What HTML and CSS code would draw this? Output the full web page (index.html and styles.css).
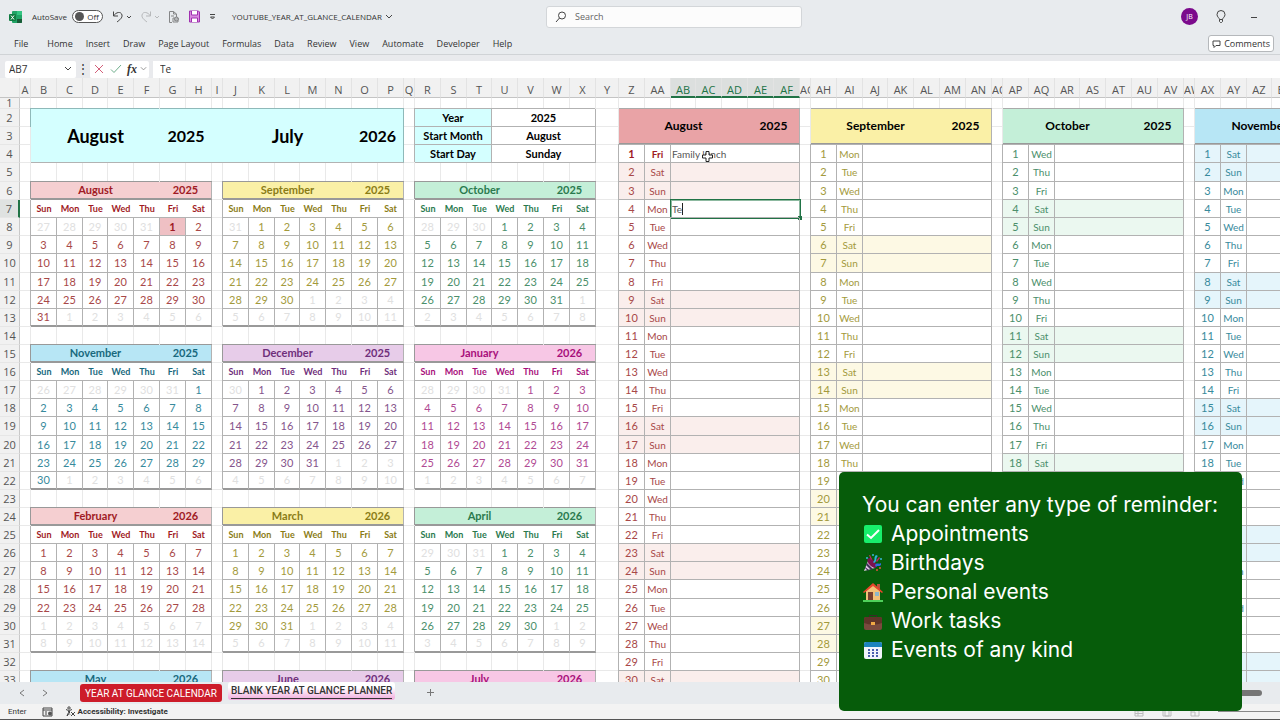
FILE: index.html
```html
<!DOCTYPE html>
<html lang="en">
<head>
    <meta charset="utf-8">
    <title>YOUTUBE_YEAR_AT_GLANCE_CALENDAR</title>
    <link rel="stylesheet" href="styles.css">
</head>
<body>
    <div class="app">
        <header class="title-bar">
            <div class="quick-access">
                <svg class="excel-logo" width="13" height="12" viewBox="0 0 13 12">
                    <rect x="3" y="0" width="10" height="12" rx="1" fill="#21a366"/>
                    <path d="M8 0h4a1 1 0 0 1 1 1v3H8z" fill="#33c481"/>
                    <path d="M8 8h5v3a1 1 0 0 1-1 1H8z" fill="#185c37"/>
                    <rect x="0" y="3" width="7" height="7" rx="1" fill="#107c41"/>
                    <path class="excel-x" d="M2 4.500l3 4M5 4.500l-3 4"/>
                </svg>
                <label for="autosave">AutoSave</label>
                <span class="switch"><input type="checkbox" id="autosave"><span>Off</span></span>
                <button class="icon-btn" aria-label="Undo">
                    <svg width="20" height="14" viewBox="0 0 20 14"><path d="M1.500 1.500v4.500h4.500M1.500 6C4 2 9 1 10 5c.5 3-2.500 5-5 7"/><path d="M15 6l2 2 2-2"/></svg>
                </button>
                <button class="icon-btn faded" aria-label="Redo">
                    <svg width="20" height="14" viewBox="0 0 20 14"><path d="M10.500 1.500v4.500H6M10.500 6C8 2 3 1 2 5c-.5 3 2.500 5 5 7"/><path d="M15 6l2 2 2-2"/></svg>
                </button>
                <button class="icon-btn dim" aria-label="Print preview">
                    <svg width="12" height="14" viewBox="0 0 12 14"><path d="M4 12.500H1.500v-11h4L8.500 4v3M5.500 1.500V4h3M5 8h5v4H5zM6 10h3M3 6h3"/><circle cx="8.500" cy="9" r="2"/></svg>
                </button>
                <button class="icon-btn save" aria-label="Save">
                    <svg width="13" height="13" viewBox="0 0 12 13"><path d="M1 1h9l1 1v10H1z" fill="#d98be0"/><path d="M3 1v4h6V1M3 12V8h6v4" fill="#fff"/></svg>
                </button>
                <button class="icon-btn" aria-label="Customize">
                    <svg width="7" height="8" viewBox="0 0 7 8"><path d="M1 1.500h5M1.500 4l2 2 2-2z"/></svg>
                </button>
                <button class="file-name">YOUTUBE_YEAR_AT_GLANCE_CALENDAR
                    <svg width="8" height="6" viewBox="0 0 8 6"><path d="M1 1l3 3 3-3"/></svg>
                </button>
            </div>
            <div class="search">
                <svg width="12" height="12" viewBox="0 0 12 12"><circle cx="7" cy="4.500" r="3.500"/><path d="M4.500 7L1 11"/></svg>
                <input type="text" placeholder="Search" aria-label="Search">
            </div>
            <div class="account">
                <button class="avatar">JB</button>
                <button class="icon-btn" aria-label="Tips">
                    <svg width="10" height="14" viewBox="0 0 10 14"><path d="M3.500 9.500C3.500 8 1 7 1 4.500a4 4 0 0 1 8 0C9 7 6.500 8 6.500 9.500v2l-1 1h-1l-1-1zM3.500 9.500h3"/></svg>
                </button>
                <button class="icon-btn" aria-label="Minimize">
                    <svg width="8" height="8" viewBox="0 0 8 8"><path d="M1 4.500h6"/></svg>
                </button>
            </div>
        </header>

        <nav class="ribbon">
            <a href="#">File</a>
            <a href="#">Home</a>
            <a href="#">Insert</a>
            <a href="#">Draw</a>
            <a href="#">Page Layout</a>
            <a href="#">Formulas</a>
            <a href="#">Data</a>
            <a href="#">Review</a>
            <a href="#">View</a>
            <a href="#">Automate</a>
            <a href="#">Developer</a>
            <a href="#">Help</a>
            <button class="comments">
                <svg width="9" height="8" viewBox="0 0 9 8"><path d="M1 1h7v4.500H4l-2 2v-2H1z"/></svg>
                Comments
            </button>
        </nav>

        <div class="formula-row">
            <div class="name-box">
                <input type="text" value="AB7" aria-label="Name box">
                <svg width="8" height="6" viewBox="0 0 8 6"><path d="M1 1l3 3 3-3"/></svg>
            </div>
            <span class="dots">&#8942;</span>
            <div class="fx-buttons">
                <button class="cancel" aria-label="Cancel"><svg width="10" height="10" viewBox="0 0 10 10"><path d="M1 1l8 8M9 1L1 9"/></svg></button>
                <button class="enter" aria-label="Enter"><svg width="12" height="10" viewBox="0 0 12 10"><path d="M1 5.500l3 3L11 1"/></svg></button>
                <button class="fx"><i>fx</i><svg width="7" height="6" viewBox="0 0 8 6"><path d="M1 1l3 3 3-3"/></svg></button>
            </div>
            <input type="text" class="formula-input" value="Te" aria-label="Formula bar">
        </div>

        <main class="sheet-wrap">
            <table class="sheet" id="sheet"></table>
        </main>

        <div class="tab-bar">
            <button class="nav-arrow" aria-label="Previous sheet"><svg width="6" height="8" viewBox="0 0 6 8"><path d="M5 1L1 4l4 3"/></svg></button>
            <button class="nav-arrow" aria-label="Next sheet"><svg width="6" height="8" viewBox="0 0 6 8"><path d="M1 1l4 3-4 3"/></svg></button>
            <button class="tab tab-red">YEAR AT GLANCE CALENDAR</button>
            <button class="tab tab-active"><span>BLANK YEAR AT GLANCE PLANNER</span></button>
            <button class="add-tab" aria-label="New sheet"><svg width="9" height="9" viewBox="0 0 9 9"><path d="M4.500 1v7M1 4.500h7"/></svg></button>
            <div class="scroll-thumb"></div>
        </div>

        <footer class="status-bar">
            <span class="mode">Enter</span>
            <svg width="11" height="10" viewBox="0 0 11 10"><path d="M1 1h9v8H1zM1 3h9M3 5h2M3 7h2"/><circle cx="8" cy="6.500" r="2" fill="#555"/></svg>
            <span class="access">
                <svg width="11" height="11" viewBox="0 0 11 11"><circle cx="4" cy="2" r="1.200"/><path d="M1 3.500l2.500 1v2L2 10l2-2.500 1 1M7 3.500l-2.500 1V7M6 6l4 4M10 6l-4 4"/></svg>
                Accessibility: Investigate
            </span>
            <span class="views">
                <svg width="10" height="10" viewBox="0 0 10 10"><path d="M1 1h8v8H1zM1 4h8M1 6.500h8M4 1v8"/></svg>
                <svg width="10" height="10" viewBox="0 0 10 10"><path d="M1 1h8v8H1zM3 3h4v6H3z"/></svg>
                <svg width="10" height="10" viewBox="0 0 10 10"><path d="M1 1h8v8H1zM1 5h4v4"/></svg>
                <span class="zoom-line"></span>
            </span>
        </footer>

        <aside class="callout">
            <p>You can enter any type of reminder:</p>
            <ul>
                <li>
                    <svg width="20" height="20" viewBox="0 0 20 20"><rect x="1" y="1" width="18" height="18" rx="2" fill="#18ee6c"/><path class="tick" d="M4 10.500l4 3.500 8-8"/></svg>
                    Appointments
                </li>
                <li>
                    <svg width="20" height="20" viewBox="0 0 20 20">
                        <path d="M1 18L5 8l7 7z" fill="#e3cbe6"/>
                        <path d="M3 12l5 5 2-1-6-6zM2 15l3 3 1-1-4-3z" fill="#3d3156"/>
                        <ellipse cx="9" cy="10" rx="3" ry="6" transform="rotate(-42 9 10)" fill="#7b1250"/>
                        <path d="M10 9c3-2 0-4 3-7l2 1c-3 2 0 5-4 7z" fill="#2fb0d8"/>
                        <path d="M12 12c2-3 4 0 6-2v2c-2 2-4 0-5 2z" fill="#2f6be0"/>
                        <path d="M6 2l1 0 2 4-1 1zM13 8l3-4 1 1-3 4z" fill="#c2255c"/>
                        <g fill="#39b8d8"><circle cx="4" cy="5" r="1"/><circle cx="18" cy="6" r="1"/><circle cx="10" cy="2" r="1"/></g>
                        <g fill="#e0533d"><circle cx="17" cy="15" r="1"/><circle cx="14" cy="17" r="1"/></g>
                    </svg>
                    Birthdays
                </li>
                <li>
                    <svg width="20" height="20" viewBox="0 0 20 20">
                        <path d="M14 2h3v6h-3z" fill="#b5533c"/>
                        <path d="M3 9l7-6 7 6v9H3z" fill="#f2c078"/>
                        <path d="M0 10l10-9 10 9-1 1-9-7-9 7z" fill="#e8452c"/>
                        <path d="M5 10h5v8H5z" fill="#7a4030"/>
                        <path d="M12 10h4v4h-4z" fill="#8fb7c9"/>
                        <path d="M0 18h20v2H0z" fill="#4fd05a"/>
                    </svg>
                    Personal events
                </li>
                <li>
                    <svg width="20" height="20" viewBox="0 0 20 20">
                        <path d="M6 6V4h8v2h-1V5H7v1z" fill="#3c2a26"/>
                        <rect x="1" y="6" width="18" height="13" rx="2" fill="#7a4a3e"/>
                        <path d="M1 8q0-2 2-2h14q2 0 2 2v4q-9 3-18 0z" fill="#5f3429"/>
                        <rect x="8" y="11" width="4" height="3" fill="#f0a845"/>
                    </svg>
                    Work tasks
                </li>
                <li>
                    <svg width="20" height="20" viewBox="0 0 20 20">
                        <rect x="1" y="2" width="18" height="17" rx="2" fill="#f1f4fb"/>
                        <path d="M1 7V4q0-2 2-2h14q2 0 2 2v3z" fill="#1c83bd"/>
                        <path d="M5 9h2v2H5zM9 9h2v2H9zM13 9h2v2h-2zM5 12h2v2H5zM9 12h2v2H9zM13 12h2v2h-2zM5 15h2v2H5zM9 15h2v2H9zM13 15h2v2h-2z" fill="#4a5fae"/>
                    </svg>
                    Events of any kind
                </li>
            </ul>
        </aside>
    </div>

    <script src="sheet.js"></script>
</body>
</html>
```
FILE: styles.css
```css
:root {
    --chrome: #e8ebee;
    --line: #b2b2b2;
    --grid: #e9e9e9;
    --green: #217346;
}

* { box-sizing: border-box; }

body {
    margin: 0;
    background: #fff;
    color: #333;
    font-family: "Open Sans", "Noto Sans", sans-serif;
    font-size: 9px;
}

button, input { font: inherit; color: inherit; border: 0; background: none; padding: 0; margin: 0; outline: 0; }
svg { fill: none; stroke: #444; flex: none; }
svg [fill] { stroke: none; }

.app { position: relative; display: flex; flex-direction: column; height: 100vh; overflow: hidden; }

/* title bar */
.title-bar { display: grid; grid-template-columns: minmax(0, 546px) 256px 1fr; align-items: center; height: 33px; background: var(--chrome); flex: none; }
.quick-access { display: flex; align-items: center; gap: 8px; padding-left: 9px; white-space: nowrap; font-size: 8px; }
.excel-logo { margin-right: 2px; }
.excel-logo .excel-x { stroke: #fff; }
.quick-access label { margin-right: -3px; }
.switch { position: relative; display: flex; align-items: center; margin-right: 1px; }
.switch input { appearance: none; width: 31px; height: 13px; border: 1px solid #555; border-radius: 7px; background: #fff; }
.switch input::before { content: ""; display: block; width: 9px; height: 9px; margin: 1px 2px; border-radius: 50%; background: #555; }
.switch span { position: absolute; right: 4px; }
.icon-btn { display: flex; align-items: center; }
.faded { opacity: .3; }
.dim { opacity: .6; }
.save [fill] { stroke: #a030b0; }
.file-name { display: flex; align-items: center; gap: 3px; margin-left: 8px; }
.search { display: flex; align-items: center; gap: 8px; height: 22px; padding: 0 8px; background: #fcfcfc; border: 1px solid #d3d6d9; border-radius: 3px; }
.search input { flex: 1; min-width: 0; }
.search input::placeholder { color: #666; opacity: 1; }
.account { display: flex; justify-content: flex-end; align-items: center; gap: 23px; padding-right: 21px; }
.account .icon-btn { width: 10px; justify-content: center; }
.avatar { width: 17px; height: 17px; margin-right: -5px; border-radius: 50%; background: #7b0a8c; color: #fff; font-size: 7px; }

/* ribbon tabs */
.ribbon { display: flex; align-items: center; gap: 13px; height: 22px; padding: 0 6px 0 14px; background: var(--chrome); border-bottom: 1px solid #d0d3d6; flex: none; }
.ribbon a { color: #333; text-decoration: none; white-space: nowrap; }
.ribbon a:first-child { margin-right: 6px; }
.comments { display: flex; align-items: center; gap: 3px; height: 17px; margin-left: auto; padding: 0 3px; background: #fff; border: 1px solid #b5b8bb; border-radius: 3px; }

/* formula bar */
.formula-row { display: flex; align-items: center; height: 23px; padding: 5px 0 0 5px; background: #e9eaed; flex: none; font-size: 10px; }
.name-box { display: flex; align-items: center; width: 71px; height: 17px; padding: 0 4px; background: #fff; border-radius: 2px; }
.name-box input { width: 55px; }
.dots { width: 14px; text-align: center; font-size: 12px; line-height: 16px; }
.fx-buttons { display: flex; align-items: center; justify-content: space-between; width: 59px; height: 17px; padding: 0 2px 0 4px; background: #fff; border-radius: 2px; }
.fx-buttons button { display: flex; align-items: center; }
.cancel svg { stroke: #d3607a; }
.enter svg { stroke: #6fae8c; }
.fx-buttons .fx { gap: 3px; font: bold 12px "Liberation Serif", serif; }
.fx svg { stroke: #888; }
.formula-input { flex: 1; min-width: 0; height: 17px; margin-left: 4px; padding-left: 7px; background: #fff; }

/* sheet grid */
.sheet-wrap { flex: 1; min-height: 0; overflow: hidden; background: #fff; }
.sheet { width: 100px; table-layout: fixed; border-collapse: separate; border-spacing: 0; }
.sheet tr { height: 18px; }
.sheet tr.tall { height: 19px; }
.sheet tr.short { height: 11px; }
.sheet tr.letters { height: 20px; }
.sheet th, .sheet td { padding: 0; overflow: hidden; white-space: nowrap; text-align: center; line-height: 10px; }
.sheet td { border-right: 1px solid var(--grid); border-bottom: 1px solid var(--grid); font-family: "Century Gothic", Lato, sans-serif; }
.sheet th { background: #f1f1f1; color: #555; font-weight: normal; font-size: 11px; }
.letters th { padding-top: 5px; border-bottom: 1px solid #c4c4c4; border-right: 1px solid #e3e3e3; }
.sheet .row-num { border-right: 1px solid #c9c9c9; border-bottom: 1px solid #e6e6e6; }
.short .row-num { line-height: 8px; }
.letters .active { background: #dcdfde; color: var(--green); border-bottom: 2px solid var(--green); }
.sheet .row-num.active { background: #dfe2e1; border-right: 2px solid var(--green); }

/* bordered ranges sit on the gridlines of their neighbours */
.sheet td.box { border-color: var(--line); box-shadow: -1px -1px 0 var(--line); }
.sheet td.banner { background: #d4ffff; border-right: 0; box-shadow: 0 -1px 0 #8fb9b9; color: #000; font-size: 18px; font-weight: bold; line-height: 22px; }
.sheet td.banner-year { font-size: 16px; }
.sheet td.banner.first { box-shadow: -1px -1px 0 #8fb9b9; }
.sheet td.banner.last { border-right: 1px solid #8fb9b9; }
.sheet td.setting { color: #000; font-size: 11px; font-weight: bold; }
.sheet td.setting-label { background: #d4ffff; }

.sheet td.month-title { background: var(--soft); color: var(--dark); font-size: 11px; font-weight: bold; border-right: 0; border-bottom: 2px solid #999; box-shadow: 0 -1px 0 #999; }
.sheet td.dow { color: var(--dark); font-size: 9px; font-weight: bold; border-right: 0; box-shadow: none; }
.sheet td.month-title.first { box-shadow: -1px -1px 0 #999; }
.sheet td.dow.first { box-shadow: -1px 0 0 var(--line); }
.sheet td.month-title.last, .sheet td.dow.last { border-right: 1px solid var(--line); }
.sheet td.day { color: var(--ink); font-size: 11px; }
.sheet td.other { color: #e0e0e0; }
.sheet td.today { background: #efc0c4; color: var(--dark); font-weight: bold; }
.sheet td.bottom { border-bottom: 2px solid #999; }

.sheet td.plan-title { background: var(--head); color: #000; font-size: 12px; font-weight: bold; border-right: 0; border-bottom: 2px solid #999; box-shadow: 0 -1px 0 #aaa; }
.sheet td.plan-title.last { border-right: 1px solid var(--line); }
.sheet td.plan-day { color: var(--ink); font-size: 11px; }
.sheet td.plan-name { font-size: 10px; }
.sheet td.marked { color: var(--dark); font-weight: bold; }
.sheet td.weekend { background: var(--weekend); }
.sheet td.event { position: relative; padding-left: 1px; text-align: left; color: #555; font-size: 10px; overflow: visible; }
.sheet td.editing { padding: 0; border: 0; box-shadow: 0 0 0 1px var(--green), inset 0 0 0 1px #8db9a0; }
.sheet td.editing::after { content: ""; position: absolute; right: -2px; bottom: -2px; width: 4px; height: 4px; background: var(--green); }
.editing input { width: 11px; height: 12px; margin-left: 1px; border-right: 1px solid #222; vertical-align: middle; }
.pointer { position: absolute; left: 30px; top: 5px; z-index: 2; fill: #fff; stroke: #222; }

.m-red { --soft: #f5cfd1; --head: #e9a3a6; --dark: #a01a24; --ink: #a84848; --weekend: #faeeec; }
.m-yellow { --soft: #faf0a6; --head: #faf0a6; --dark: #8a7c16; --ink: #a39a3c; --weekend: #fdf9e4; }
.m-green { --soft: #c4efd8; --head: #c4efd8; --dark: #2a7a4e; --ink: #4b8f6b; --weekend: #ebf8f0; }
.m-blue { --soft: #b7e6f5; --head: #b7e6f5; --dark: #18697d; --ink: #388a9c; --weekend: #e5f5fb; }
.m-purple { --soft: #e7cce9; --head: #e7cce9; --dark: #6f2f7b; --ink: #85558c; --weekend: #f6edf7; }
.m-pink { --soft: #f7c7e5; --head: #f7c7e5; --dark: #a80f7b; --ink: #b04a93; --weekend: #fcecf6; }

/* bottom bars */
.tab-bar { display: flex; align-items: center; height: 22px; padding: 0 18px; background: var(--chrome); flex: none; font-family: Roboto, sans-serif; font-size: 10px; }
.nav-arrow { width: 22px; margin-left: -7px; margin-right: 8px; }
.nav-arrow svg, .add-tab svg { stroke: #777; }
.tab { height: 18px; padding: 0 5px; border-radius: 3px; white-space: nowrap; }
.tab-red { margin-left: 16px; background: #cd1c2a; color: #fff; }
.tab-active { align-self: flex-start; margin-left: 6px; padding: 0 3px; background: linear-gradient(#fff 30%, #f0a8dc); font-weight: 500; }
.tab-active span { display: block; border-bottom: 1px solid #333; line-height: 15px; }
.add-tab { margin-left: 31px; }
.scroll-thumb { width: 180px; height: 6px; margin-left: auto; border-radius: 3px; background: #767676; }
.status-bar { display: flex; align-items: center; gap: 14px; height: 16px; padding: 0 0 0 8px; background: #f3f3f3; border-bottom: 1px solid #555; font-family: Roboto, sans-serif; font-size: 8px; flex: none; }
.status-bar .mode { margin-right: 1px; }
.access { display: flex; align-items: center; gap: 2px; margin-left: -2px; font-weight: bold; }
.views { display: flex; align-items: center; gap: 18px; margin-left: auto; }
.views svg { stroke: #bbb; }
.zoom-line { width: 62px; height: 1px; background: #888; }

/* reminder callout */
.callout { position: absolute; right: 38px; bottom: 9px; width: 403px; padding: 18px 20px 47px 23px; border-radius: 5px; background: #065c0a; color: #fff; font: 21px/29px Inter, sans-serif; white-space: nowrap; }
.callout p { margin: 0; }
.callout ul { margin: 0; padding: 0; list-style: none; }
.callout li { display: flex; align-items: center; gap: 8px; }
.callout svg { stroke: none; margin-left: 1px; }
.callout .tick { stroke: #fff; stroke-width: 2px; }
```
FILE: sheet.js
```js
const LAST_ROW = 40;
const LAST_COL = 56;
const MONTHS = ['January', 'February', 'March', 'April', 'May', 'June', 'July',
    'August', 'September', 'October', 'November', 'December'];
const DAYS = ['Sun', 'Mon', 'Tue', 'Wed', 'Thu', 'Fri', 'Sat'];
const THEMES = ['m-red', 'm-yellow', 'm-green', 'm-blue', 'm-purple', 'm-pink'];
const startYear = 2025;
const startMonth = 7;

const cells = {};
const covered = {};

function put(row, col, html, cls, colspan = 1, rowspan = 1) {
    cells[row + ',' + col] = { html, cls, colspan, rowspan };
    for (let r = row; r < row + rowspan; r++) {
        for (let c = col; c < col + colspan; c++) {
            if (r !== row || c !== col) covered[r + ',' + c] = true;
        }
    }
}

function letter(n) {
    return n > 26 ? String.fromCharCode(64 + Math.floor((n - 1) / 26)) + letter((n - 1) % 26 + 1)
        : String.fromCharCode(64 + n);
}

function colWidth(c) {
    if (c === 1) return 11;
    if (c === 25) return 23;
    const pos = (c - 2) % 8;
    if (pos === 7) return 11;
    return pos === 2 ? 25 : 26;
}

function addMonth(i) {
    const first = new Date(startYear, startMonth + i, 1);
    const row = 6 + Math.floor(i / 3) * 9;
    const col = 2 + (i % 3) * 8;
    const theme = THEMES[i % 6];
    put(row, col, MONTHS[first.getMonth()], `month-title first ${theme}`, 5);
    put(row, col + 5, first.getFullYear(), `month-title last ${theme}`, 2);
    DAYS.forEach((d, k) => {
        put(row + 1, col + k, d, `box dow ${theme}${k === 0 ? ' first' : ''}${k === 6 ? ' last' : ''}`);
    });
    for (let k = 0; k < 42; k++) {
        const date = new Date(first.getFullYear(), first.getMonth(), 1 - first.getDay() + k);
        let cls = `box day ${theme}`;
        if (date.getMonth() !== first.getMonth()) cls += ' other';
        if (i === 0 && date.getMonth() === startMonth && date.getDate() === 1) cls += ' today';
        if (k >= 35) cls += ' bottom';
        put(row + 2 + Math.floor(k / 7), col + k % 7, date.getDate(), cls);
    }
}

function addPlanner(i) {
    const first = new Date(startYear, startMonth + i, 1);
    const col = 26 + i * 8;
    const theme = THEMES[i % 6];
    const count = new Date(startYear, startMonth + i + 1, 0).getDate();
    put(2, col, MONTHS[first.getMonth()], `plan-title ${theme}`, 5, 2);
    put(2, col + 5, first.getFullYear(), `plan-title last ${theme}`, 2, 2);
    for (let d = 1; d <= count; d++) {
        const dow = new Date(first.getFullYear(), first.getMonth(), d).getDay();
        let cls = `box ${theme}`;
        if (dow === 0 || dow === 6) cls += ' weekend';
        const marked = i === 0 && d === 1 ? ' marked' : '';
        let text = '', extra = ' event';
        if (i === 0 && d === 1) {
            text = 'Family lunch<svg class="pointer" width="13" height="13" viewBox="0 0 13 13"><path d="M5 1.500h3v3.500h3.500v3H8v3.500H5V8H1.500V5H5z"/></svg>';
        }
        if (i === 0 && d === 4) {
            text = '<input type="text" value="Te" aria-label="AB7">';
            extra += ' editing';
        }
        put(d + 3, col, d, cls + ' plan-day' + marked);
        put(d + 3, col + 1, DAYS[dow], cls + ' plan-day plan-name' + marked);
        put(d + 3, col + 2, text, cls + extra, 5);
    }
}

// start / end banner
put(2, 2, 'August', 'box banner first', 5, 3);
put(2, 7, '2025', 'box banner banner-year', 2, 3);
put(2, 9, '', 'box banner', 1, 3);
put(2, 10, 'July', 'box banner', 5, 3);
put(2, 15, '2026', 'box banner banner-year last', 2, 3);

// settings
[['Year', '2025'], ['Start Month', 'August'], ['Start Day', 'Sunday']].forEach(([name, value], k) => {
    put(2 + k, 18, name, 'box setting setting-label', 3);
    put(2 + k, 21, value, 'box setting', 4);
});

for (let i = 0; i < 12; i++) addMonth(i);
for (let i = 0; i < 4; i++) addPlanner(i);

let html = '<colgroup><col style="width:20px">';
for (let c = 1; c <= LAST_COL; c++) html += `<col style="width:${colWidth(c)}px">`;
html += '</colgroup><tr class="letters"><th></th>';
for (let c = 1; c <= LAST_COL; c++) {
    html += `<th class="${c >= 28 && c <= 32 ? 'active' : ''}">${letter(c)}</th>`;
}
html += '</tr>';
for (let r = 1; r <= LAST_ROW; r++) {
    const size = r === 1 ? 'short' : (r === 5 || r % 9 === 1) ? 'tall' : '';
    html += `<tr class="${size}"><th class="row-num${r === 7 ? ' active' : ''}">${r}</th>`;
    for (let c = 1; c <= LAST_COL; c++) {
        const key = r + ',' + c;
        if (covered[key]) continue;
        const cell = cells[key];
        html += cell
            ? `<td class="${cell.cls}" colspan="${cell.colspan}" rowspan="${cell.rowspan}">${cell.html}</td>`
            : '<td></td>';
    }
    html += '</tr>';
}
document.getElementById('sheet').innerHTML = html;
```
